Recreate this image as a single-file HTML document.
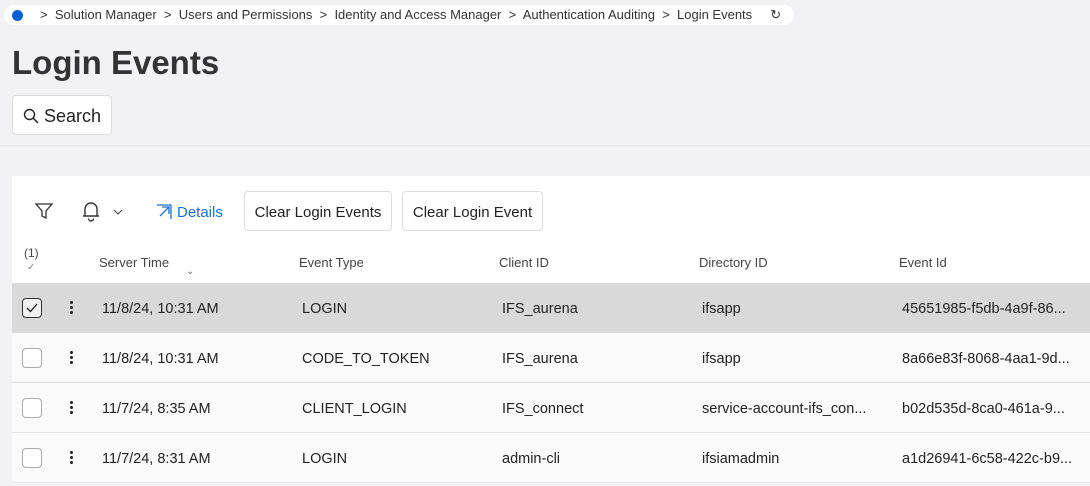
<!DOCTYPE html><html><head><style>
body{margin:0;width:1090px;height:480px;overflow:hidden;background:#f2f1f4;font-family:"Liberation Sans",sans-serif;color:#222;position:relative}
.a{position:absolute;white-space:nowrap}
.bc{left:4px;top:5px;height:20px;width:790px;background:#fff;border-radius:10px;font-size:13px;color:#333;line-height:20px}
.btn{position:absolute;background:#fff;border:1px solid #ddd;border-radius:4px;font-size:15px;line-height:42px;text-align:center;color:#222}
.panel{left:12px;top:176px;width:1078px;height:304px;background:#fff}
.row{position:absolute;left:12px;width:1078px;height:49px;background:#fafafa;border-bottom:1px solid #e4e4e4;font-size:14.5px;line-height:53px}
.row span{position:absolute}
.cb{position:absolute;left:10px;top:15px;width:18px;height:18px;border:1px solid #aaa;border-radius:4px;background:#fff;line-height:0}
.cb svg{display:block}
.dots{position:absolute;left:58px;top:18px;width:3px;line-height:0}
.dots i{display:block;width:3px;height:3px;background:#222;border-radius:2px;margin-bottom:2px}
.h{font-size:13px;color:#444;top:255px}
</style></head><body>
<div class="a bc"><span style="position:absolute;left:8px;top:5px;width:11px;height:11px;border-radius:6px;background:#0a61d1"></span><span style="position:absolute;left:36px">&gt;&nbsp; Solution Manager &nbsp;&gt;&nbsp; Users and Permissions &nbsp;&gt;&nbsp; Identity and Access Manager &nbsp;&gt;&nbsp; Authentication Auditing &nbsp;&gt;&nbsp; Login Events &nbsp;&nbsp;&nbsp; ↻</span></div>
<div class="a" style="left:12px;top:44px;font-size:33px;font-weight:bold;color:#333">Login Events</div>
<div class="btn" style="left:12px;top:95px;width:98px;height:38px;font-size:18px;line-height:40px"><svg width="16" height="16" style="vertical-align:-2px" viewBox="0 0 16 16"><circle cx="6.5" cy="6.5" r="5" fill="none" stroke="#222" stroke-width="1.4"/><path d="M10 10l5 5" stroke="#222" stroke-width="1.5"/></svg> Search</div>
<div class="a" style="left:0;top:145px;width:1090px;height:1px;background:#e2e1e4"></div>
<div class="a panel"></div>
<svg class="a" style="left:34px;top:201px" width="20" height="20" viewBox="0 0 20 20"><path d="M2 3h16l-6 7v7l-4-2v-5z" fill="none" stroke="#333" stroke-width="1.3"/></svg>
<svg class="a" style="left:80px;top:200px" width="46" height="22" viewBox="0 0 46 22"><path d="M3 16h16M5 16V9a6 6 0 0 1 12 0v7M8.5 18.5a2.5 2.5 0 0 0 5 0" fill="none" stroke="#333" stroke-width="1.4"/><path d="M34 10l4 4 4-4" fill="none" stroke="#444" stroke-width="1.1"/></svg>
<svg class="a" style="left:156px;top:204px" width="16" height="16" viewBox="0 0 16 16"><path d="M1 1h14v14M4 12L13 3M6 3h7v7" fill="none" stroke="#1a6fd6" stroke-width="1.3"/></svg>
<div class="a" style="left:177px;top:204px;font-size:15px;color:#1a6fd6">Details</div>
<div class="btn" style="left:244px;top:191px;width:146px;height:38px">Clear Login Events</div>
<div class="btn" style="left:402px;top:191px;width:139px;height:38px">Clear Login Event</div>
<div class="a" style="left:24px;top:246px;font-size:12px;color:#444">(1)</div>
<div class="a" style="left:27px;top:262px;font-size:10px;color:#888">✓</div>
<div class="a h" style="left:99px">Server Time</div>
<div class="a" style="left:186px;top:266px;font-size:10px;color:#666">⌄</div>
<div class="a h" style="left:299px">Event Type</div>
<div class="a h" style="left:499px">Client ID</div>
<div class="a h" style="left:699px">Directory ID</div>
<div class="a h" style="left:899px">Event Id</div>
<div class="row" style="top:283px;background:#d9d9d9;border-bottom-color:#d9d9d9"><div class="cb" style="border-color:#333;background:#f0f0f0"><svg width="18" height="18" viewBox="0 0 18 18"><path d="M4 9l3.5 3.5L14 5" fill="none" stroke="#222" stroke-width="1.3"/></svg></div><div class="dots"><i></i><i></i><i></i></div><span style="left:90px">11/8/24, 10:31 AM</span><span style="left:290px">LOGIN</span><span style="left:490px">IFS_aurena</span><span style="left:690px">ifsapp</span><span style="left:890px">45651985-f5db-4a9f-86...</span></div>
<div class="row" style="top:333px"><div class="cb"></div><div class="dots"><i></i><i></i><i></i></div><span style="left:90px">11/8/24, 10:31 AM</span><span style="left:290px">CODE_TO_TOKEN</span><span style="left:490px">IFS_aurena</span><span style="left:690px">ifsapp</span><span style="left:890px">8a66e83f-8068-4aa1-9d...</span></div>
<div class="row" style="top:383px"><div class="cb"></div><div class="dots"><i></i><i></i><i></i></div><span style="left:90px">11/7/24, 8:35 AM</span><span style="left:290px">CLIENT_LOGIN</span><span style="left:490px">IFS_connect</span><span style="left:690px">service-account-ifs_con...</span><span style="left:890px">b02d535d-8ca0-461a-9...</span></div>
<div class="row" style="top:433px"><div class="cb"></div><div class="dots"><i></i><i></i><i></i></div><span style="left:90px">11/7/24, 8:31 AM</span><span style="left:290px">LOGIN</span><span style="left:490px">admin-cli</span><span style="left:690px">ifsiamadmin</span><span style="left:890px">a1d26941-6c58-422c-b9...</span></div>
</body></html>
